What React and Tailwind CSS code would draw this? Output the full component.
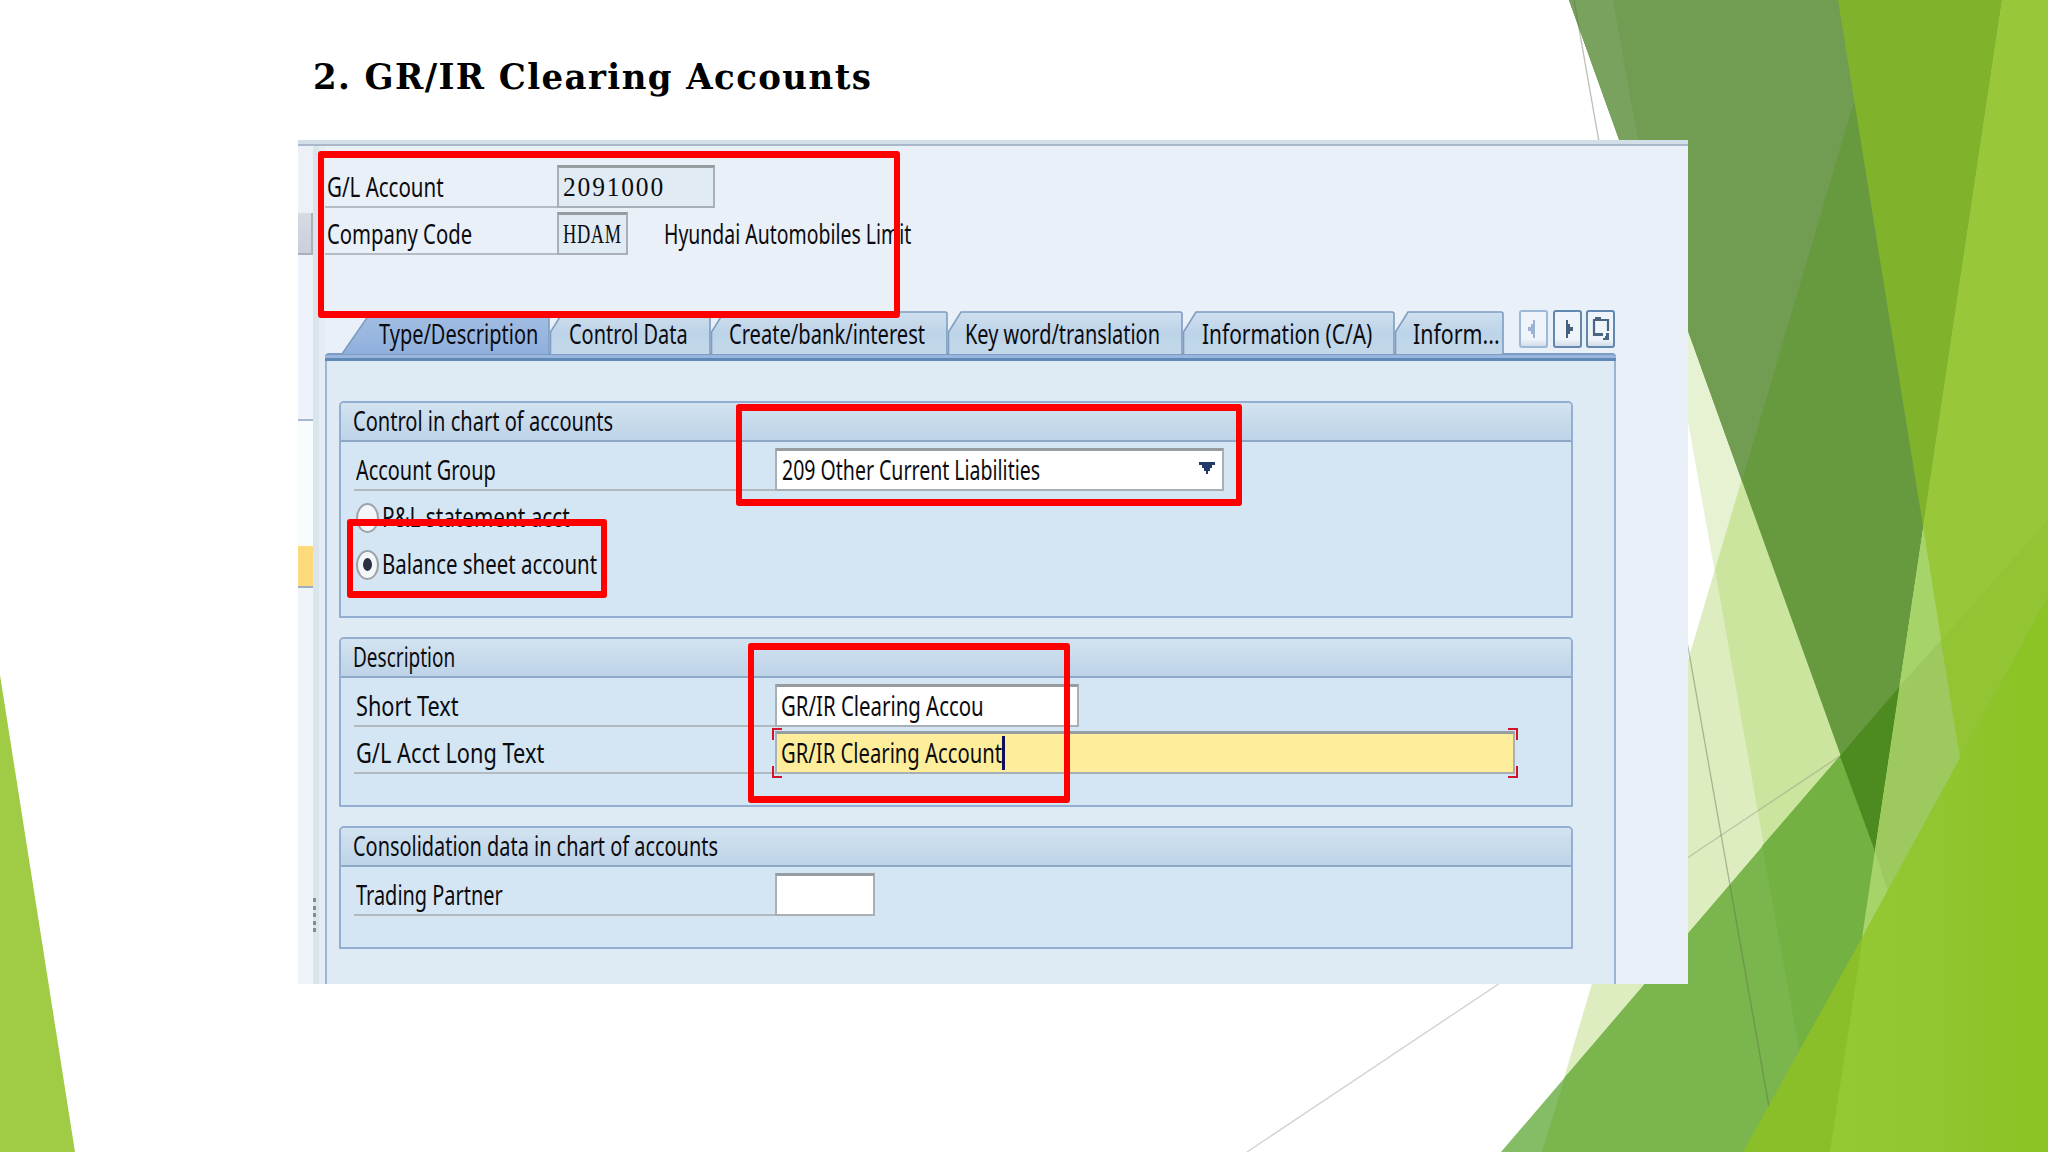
import { useLayoutEffect, useRef, useState } from 'react';

// Text squeezed (or stretched) horizontally to an exact width
function Fit({ width, className = '', children }) {
    const ref = useRef(null);
    const [scale, setScale] = useState(1);

    useLayoutEffect(() => {
        setScale(width / ref.current.offsetWidth);
    }, [width]);

    return (
        <span className={`block shrink-0 whitespace-nowrap ${className}`} style={{ width }}>
            <span ref={ref} className="inline-block origin-left" style={{ transform: `scaleX(${scale})` }}>
                {children}
            </span>
        </span>
    );
}

function Background() {
    return (
        <svg className="absolute inset-0" width="2048" height="1152" viewBox="0 0 2048 1152">
            <defs>
                <linearGradient id="corner" x1="0" x2="1" y1="0" y2="0">
                    <stop offset="0" stopColor="#95c934" />
                    <stop offset="0.5" stopColor="#92c630" />
                    <stop offset="0.85" stopColor="#8cc325" />
                </linearGradient>
            </defs>
            <polygon points="0,675 75,1152 0,1152" fill="#9fcb45" />

            {/* Pale facets */}
            <polygon points="1613,0 2048,0 2048,1152 1818,1152" fill="#e7f2d3" />
            <polygon points="1884,0 2048,0 2048,1152 1542,1152" fill="#ddedc0" />
            <polygon points="1884,0 2048,0 2048,1152 1818,1152 1715,570" fill="#cce59e" />

            {/* Bottom band */}
            <polygon points="1501,1152 1840,756 1900,686 2048,520 2048,1152" fill="#84bd66" />
            <polygon points="1565,1077 1840,756 2048,520 2048,1152 1542,1152" fill="#7bb54e" />
            <polygon points="1762,846 1840,756 2048,520 2048,1152 1818,1152" fill="#74b143" />

            {/* Dark facet */}
            <polygon points="1569,0 2002,0 1875,851" fill="#67993f" />
            <polygon points="1569,0 1884,0 1742,481" fill="#719d52" />
            <polygon points="1569,0 1613,0 1657,246" fill="#79a25f" />
            <polygon points="1840,756 1900,686 1875,851" fill="#4d8a20" />

            <path d="M1574 0L1777 1152" stroke="#5b6b45" strokeOpacity="0.42" strokeWidth="1.3" />
            <path d="M1247 1152L1840 756" stroke="#777777" strokeOpacity="0.35" strokeWidth="1.3" />

            {/* Bright strips on the right */}
            <polygon points="2002,0 2048,0 2048,1152 1830,1152" fill="#a6d468" />
            <polygon points="1900,686 2048,520 2048,700 1888,892 1875,851" fill="#9dc95f" />
            <polygon points="1838,0 2002,0 1923,526" fill="#81b22c" />
            <polygon points="2002,0 2048,0 2048,757 1960,757 1923,526" fill="#98c73a" />
            <polygon points="1941,641 2048,520 2048,757 1960,757" fill="#93c433" />
            <polygon points="1743,1152 1863,936 2048,597 2048,1152" fill="#8bbf29" />
            <polygon points="1863,936 2048,597 2048,1152 1830,1152" fill="url(#corner)" />
        </svg>
    );
}

// Red marker rectangle drawn over the form
function Marker({ className }) {
    return <div className={`absolute rounded-[3px] border-x-[6px] border-y-[7px] border-[#fe0000] ${className}`} />;
}

function Tab({ label, textWidth, width, active }) {
    const id = active ? 'tabActive' : 'tabIdle';
    const shape = active
        ? `M0 43L29 1H${width - 1}V43`
        : `M0.5 43V21L13 1H${width - 3}Q${width - 1} 1 ${width - 1} 3V43`;
    return (
        <div className="relative flex h-[42px] shrink-0 items-center justify-end pt-[3px]" style={{ width }}>
            <svg className="absolute inset-0" width={width} height="43">
                <defs>
                    <linearGradient id="tabActive" x1="0" x2="0" y1="0" y2="1">
                        <stop offset="0" stopColor="#a3bee3" />
                        <stop offset="1" stopColor="#8fb0dc" />
                    </linearGradient>
                    <linearGradient id="tabIdle" x1="0" x2="0" y1="0" y2="1">
                        <stop offset="0" stopColor="#cfe0ef" />
                        <stop offset="0.5" stopColor="#bdd3e8" />
                        <stop offset="1" stopColor="#c3d9ea" />
                    </linearGradient>
                </defs>
                <path d={shape} fill={`url(#${id})`} stroke="#7f9cc0" strokeWidth="1.6" />
            </svg>
            <Fit width={textWidth} className={active ? 'relative mr-3' : label === 'Inform...' ? 'relative mr-1' : 'relative mr-[23px]'}>{label}</Fit>
        </div>
    );
}

function ScrollButton({ faded, children }) {
    return (
        <div
            className={`flex h-[38px] w-[29px] items-center justify-center rounded-[3px] border-2 bg-linear-to-b from-[#eef4fa] from-80% to-[#d3dde8] ${faded ? 'border-[#9db8d6]' : 'border-[#6288b0]'}`}
        >
            {children}
        </div>
    );
}

function Group({ title, titleWidth, className, children }) {
    return (
        <section className={`w-[1234px] rounded-t-[5px] border-2 border-[#93aed0] bg-[#d4e6f3] ${className}`}>
            <div className="flex h-[39px] items-center rounded-t-[3px] border-b-2 border-[#8ea8c8] bg-linear-to-b from-[#d3e3f0] to-[#bdd3e8] pb-0.5 pl-3">
                <Fit width={titleWidth}>{title}</Fit>
            </div>
            {children}
        </section>
    );
}

function Row({ label, labelWidth, children }) {
    return (
        <div className="ml-[13px] flex h-[42px]">
            <div className="flex h-[43px] w-[421px] items-center border-b-2 border-[#b1bac1] pt-[3px] pl-0.5">
                <Fit width={labelWidth}>{label}</Fit>
            </div>
            {children}
        </div>
    );
}

function Field({ className = '', children }) {
    return (
        <div className={`relative flex h-[43px] items-center border-2 border-t-[3px] border-[#a9b0b5] border-t-[#969c9f] ${className}`}>
            {children}
        </div>
    );
}

function Radio({ checked, label, labelWidth }) {
    return (
        <div className="ml-[15px] flex h-[47px] items-center">
            <span className="flex h-[30px] w-[23px] items-center justify-center rounded-[50%] border-[2.5px] border-[#9da3a8] bg-[#f4f7f9]">
                {checked && <span className="h-[13px] w-[9px] rounded-[50%] bg-[#2b3142]" />}
            </span>
            <Fit width={labelWidth} className="-mt-0.5 ml-[3px]">{label}</Fit>
        </div>
    );
}

// Side sliver of the neighbouring tree pane plus the splitter
function Sliver() {
    return (
        <div className="flex w-[27px] shrink-0">
            <div className="flex w-[15px] flex-col bg-[#eff4fb]">
                <div className="h-[67px] bg-[#ebf1f7]" />
                <div className="h-[42px] border-r-2 border-b-2 border-[#a9b0bb] bg-linear-to-b from-[#d6dbe3] to-[#c9d0da]" />
                <div className="h-[166px] border-b-2 border-[#a8b8d2] bg-[#eef3fb]" />
                <div className="h-[125px] bg-[#f9fcfd]" />
                <div className="h-[42px] border-b-2 border-[#9eadc0] bg-[#fdda7b]" />
            </div>
            <div className="flex w-[6px] flex-col gap-[3.5px] bg-[#d9e5eb] pt-[752px]">
                {[0, 1, 2, 3, 4].map((i) => (
                    <span key={i} className="h-1 w-[3px] bg-[#848b98]" />
                ))}
            </div>
            <div className="w-[6px] bg-[#e4ecf4]" />
        </div>
    );
}

export default function App() {
    return (
        <main className="relative h-[1152px] w-[2048px] overflow-hidden bg-white">
            <Background />

            <div className="relative pt-[46px] pl-[298px] text-black">
                <h1 className="flex h-[94px] font-['DejaVu_Serif','Liberation_Serif',serif] text-[36px] leading-[60px] font-bold tracking-[1.5px]">
                    <Fit width={559} className="ml-[15px]">2. GR/IR Clearing Accounts</Fit>
                </h1>

                <div className="relative flex h-[844px] w-[1390px] flex-col overflow-hidden bg-[#e9f0f7] font-['Noto_Sans',sans-serif] text-[27px] leading-[36px] text-[#0b0b10]">
                    <div className="h-[6px] shrink-0 border-b-2 border-[#a9b9ca] bg-[#d3dfe8]" />
                    <div className="flex flex-1">
                        <Sliver />
                        <div className="flex flex-1 flex-col">
                            {/* Account header */}
                            <div className="flex flex-col gap-[5px] pt-[19px]">
                                <div className="flex h-[42px]">
                                    <div className="flex h-[43px] w-[232px] items-center border-b-2 border-[#b5bdc4] pt-[3px] pl-[2px]">
                                        <Fit width={117}>G/L Account</Fit>
                                    </div>
                                    <Field className="w-[158px] bg-[#e0ebf4] pl-[4px] font-['Liberation_Serif',serif] text-[28px] tracking-[2px]">
                                        <Fit width={102}>2091000</Fit>
                                    </Field>
                                </div>
                                <div className="flex h-[42px]">
                                    <div className="flex h-[43px] w-[232px] items-center border-b-2 border-[#b5bdc4] pt-[3px] pl-[2px]">
                                        <Fit width={145}>Company Code</Fit>
                                    </div>
                                    <Field className="w-[71px] bg-[#e0ebf4] pl-[4px] font-['Liberation_Serif',serif] text-[28px] tracking-[1px]">
                                        <Fit width={59}>HDAM</Fit>
                                    </Field>
                                    <Fit width={247} className="ml-[36px] pt-1">Hyundai Automobiles Limit</Fit>
                                </div>
                            </div>

                            {/* Tab strip */}
                            <div className="mt-[57px] flex h-[42px] pl-[17px]">
                                <Tab active label="Type/Description" textWidth={159} width={208} />
                                <Tab label="Control Data" textWidth={119} width={161} />
                                <Tab label="Create/bank/interest" textWidth={196} width={237} />
                                <Tab label="Key word/translation" textWidth={195} width={235} />
                                <Tab label="Information (C/A)" textWidth={170} width={212} />
                                <Tab label="Inform..." textWidth={87} width={109} />
                                <div className="-mt-px ml-[15px] flex gap-[4.5px]">
                                    <ScrollButton faded>
                                        <svg className="-ml-1" width="8" height="18" viewBox="0 0 8 18">
                                            <path d="M7 0V18H5V14H3V11H0V7H3V4H5V0Z" fill="#9bb3d0" />
                                        </svg>
                                    </ScrollButton>
                                    <ScrollButton>
                                        <svg className="ml-1" width="8" height="18" viewBox="0 0 8 18">
                                            <path d="M1 0V18H3V14H5V11H8V7H5V4H3V0Z" fill="#47627e" />
                                        </svg>
                                    </ScrollButton>
                                    <ScrollButton>
                                        <svg width="18" height="24" viewBox="0 0 18 24">
                                            <path d="M3 0H9V3H3Z" fill="#4a657f" />
                                            <path d="M9 18H2V3H16V14" fill="none" stroke="#4a657f" strokeWidth="2.2" />
                                            <path d="M1 16H11V19H1ZM13 19H14V16H17V23H11V21H13Z" fill="#4a657f" />
                                        </svg>
                                    </ScrollButton>
                                </div>
                            </div>

                            {/* Tab body */}
                            <div className="h-[8px] w-[1291px] rounded-t-[4px] border-t-2 border-b-3 border-t-[#7d9cc4] border-b-[#6089b5] bg-[#9ab6de]" />
                            <div className="w-[1291px] flex-1 border-x-2 border-x-[#9bb6d3] bg-[#deebf4] pt-10 pl-[12px]">
                                <Group title="Control in chart of accounts" titleWidth={260} className="h-[217px]">
                                    <div className="pt-[6px]">
                                        <Row label="Account Group" labelWidth={140}>
                                            <Field className="w-[449px] justify-between bg-white pr-[7px] pl-[5px]">
                                                <Fit width={258}>209 Other Current Liabilities</Fit>
                                                <svg className="-mt-1" width="16" height="12" viewBox="0 0 16 12">
                                                    <path d="M0 0H16V3H13V6H11V9H9V12H7V9H5V6H3V3H0Z" fill="#233a68" />
                                                </svg>
                                            </Field>
                                        </Row>
                                        <div className="pt-1">
                                            <Radio label="P&L statement acct" labelWidth={188} />
                                            <Radio checked label="Balance sheet account" labelWidth={215} />
                                        </div>
                                    </div>
                                </Group>

                                <Group title="Description" titleWidth={102} className="mt-[19px] h-[170px]">
                                    <div className="flex flex-col gap-[5px] pt-[6px]">
                                        <Row label="Short Text" labelWidth={103}>
                                            <Field className="w-[304px] bg-white pl-1">
                                                <Fit width={203}>GR/IR Clearing Accou</Fit>
                                            </Field>
                                        </Row>
                                        <Row label="G/L Acct Long Text" labelWidth={188}>
                                            <Field className="w-[740px] bg-[#feee9c] pl-1">
                                                <Fit width={221}>GR/IR Clearing Account</Fit>
                                                <span className="h-[34px] w-[2.5px] bg-[#10105a]" />
                                                {/* Focus corners */}
                                                <span className="absolute -top-[6px] -left-[5px] h-[12px] w-[10px] border-t-[2.5px] border-l-2 border-[#d0142c]" />
                                                <span className="absolute -bottom-[6px] -left-[5px] h-[12px] w-[10px] border-b-[2.5px] border-l-2 border-[#d0142c]" />
                                                <span className="absolute -top-[6px] -right-[5px] h-[12px] w-[10px] border-t-[2.5px] border-r-2 border-[#d0142c]" />
                                                <span className="absolute -right-[5px] -bottom-[6px] h-[12px] w-[10px] border-r-2 border-b-[2.5px] border-[#d0142c]" />
                                            </Field>
                                        </Row>
                                    </div>
                                </Group>

                                <Group title="Consolidation data in chart of accounts" titleWidth={365} className="mt-[19px] h-[123px]">
                                    <div className="pt-[6px]">
                                        <Row label="Trading Partner" labelWidth={147}>
                                            <Field className="w-[100px] bg-white" />
                                        </Row>
                                    </div>
                                </Group>
                            </div>
                        </div>
                    </div>
                </div>
            </div>

            <Marker className="top-[151px] left-[318px] h-[167px] w-[582px]" />
            <Marker className="top-[404px] left-[736px] h-[102px] w-[506px]" />
            <Marker className="top-[519px] left-[347px] h-[79px] w-[260px]" />
            <Marker className="top-[643px] left-[748px] h-[160px] w-[322px]" />
        </main>
    );
}
